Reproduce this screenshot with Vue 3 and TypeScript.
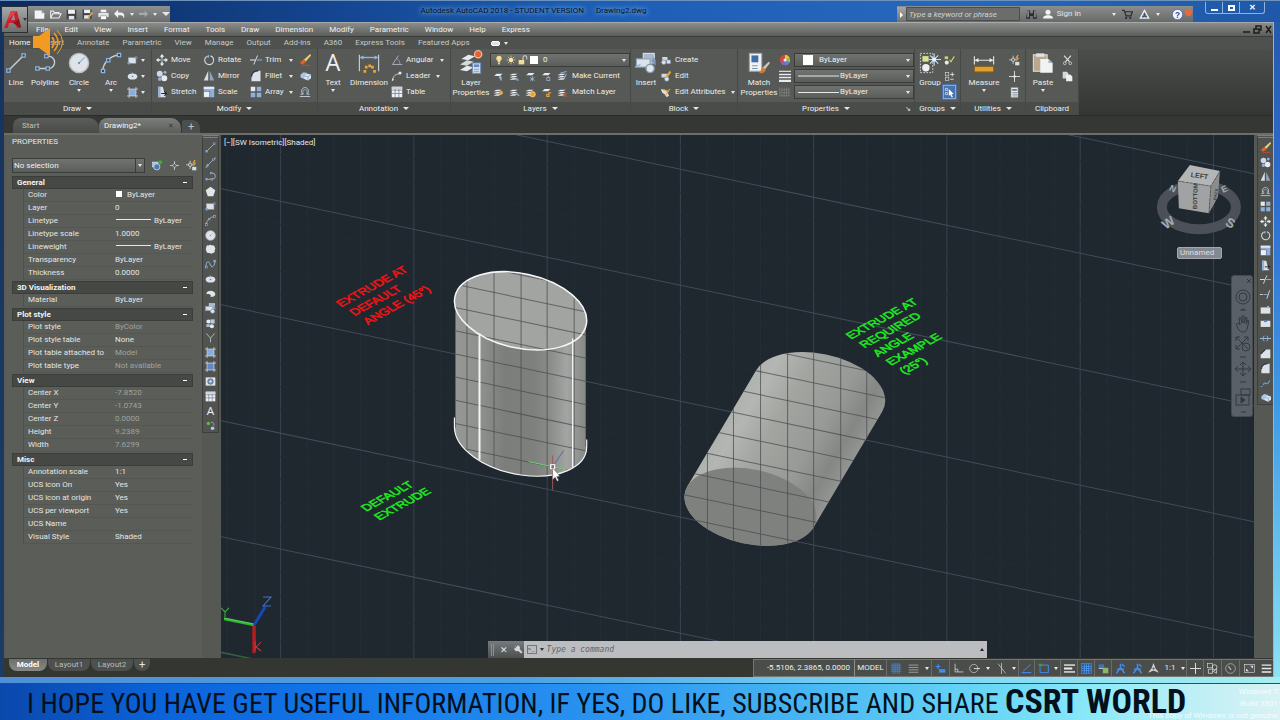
<script setup lang="ts">
import { h, ref } from 'vue'

const W = '#e8ebee'
const B = '#8fb4e0'
const O = '#e8a63a'
const dot = (x: number, y: number, c = B) => `<rect x="${x - 1.2}" y="${y - 1.2}" width="2.4" height="2.4" fill="#33465c" stroke="${c}" stroke-width=".9"/>`
const ln = (d: string, c = W, w = 1.2) => `<path d="${d}" fill="none" stroke="${c}" stroke-width="${w}"/>`
const fl = (d: string, c = W) => `<path d="${d}" fill="${c}"/>`
const rc = (x: number, y: number, w: number, hh: number, c = W, s = 'none') => `<rect x="${x}" y="${y}" width="${w}" height="${hh}" fill="${c}" stroke="${s}" stroke-width=".8"/>`
const ci = (x: number, y: number, r: number, c = W, s = 'none') => `<circle cx="${x}" cy="${y}" r="${r}" fill="${c}" stroke="${s}" stroke-width="1"/>`
const sheet = (y: number) => fl(`M3 ${y}l3-3h8l-3 3z`)
const stack = fl('M2 7l4-2h7l-4 2z') + fl('M2 10l4-2h7l-4 2z') + fl('M2 13l4-2h7l-4 2z')

const icons: Record<string, string> = {
  line: ln('M2 14L14 2', '#c9ced3', 1) + dot(2.5, 13.5) + dot(13.5, 2.5),
  pline: ln('M2 12h8.500a4 4 0 000-9H9', '#c9ced3', 1) + dot(2.5, 12) + dot(9, 3) + dot(10, 12),
  circle: ci(8, 8, 7, '#dfe3e8', '#b5bcc4') + ln('M8 8l4-4', B, 0.8) + ci(8, 8, 0.8, '#5c83b8'),
  arc: ln('M2 14C2 8 7 3 14 2', '#c9ced3', 1) + dot(2.2, 13.8) + dot(6, 6) + dot(13.8, 2.2),
  rect: rc(2, 4, 11, 8, '#dde2e8', '#9aa4b0') + dot(2.5, 12) + dot(13.5, 4),
  ellipse: '<ellipse cx="8" cy="8" rx="7" ry="4.500" fill="#dde2e8"/>' + ci(8, 8, 1.2, '#5c83b8') + ci(8, 3.5, 1.2, B),
  hatch: rc(3, 3, 10, 10, '#7ba3dc') + ln('M3 0v16M13 0v16M0 3h16M0 13h16', '#dfe6ee', 1) + ln('M4 9l5-5M5 12l7-7M8 13l5-5', '#c6daf5', 0.7),
  region: rc(3, 3, 10, 10, '#5f88c6') + ln('M3 0v16M13 0v16M0 3h16M0 13h16', '#dfe6ee', 1),
  move: fl('M8 0l3 3.500H9V6H7V3.500H5zM8 16l-3-3.500h2V10h2v2.500h2zM0 8l3.500-3v2H6v2H3.500v2zM16 8l-3.500 3V9H10V7h2.500V5z') + rc(7, 7, 2, 2, B),
  rotate: ln('M5 3.200A6 6 0 1 0 10 2.500', '#d5dade', 1.5) + fl('M3 4l5-3v4z', B),
  trim: ln('M0 8h7', W, 1.3) + ln('M9 8h7', B, 1.3) + ln('M5 14L10 2', W, 1.2),
  extend: ln('M0 8h4', W) + ln('M5 8h6', B) + ln('M10 14l4-12', W),
  erase: fl('M15 0l1 2-7 8-3-2z', '#f0d06a') + fl('M6 7l4 3-5 4-4-2z', '#d8652e') + ln('M4 15h11', '#d04a2a'),
  copy: ci(5, 5, 4, '#cfd8e2') + ci(11, 11, 4) + ci(5, 12, 2.5, B) + ci(12, 3, 2, B),
  mirror: fl('M7 1v13H1z', '#d8dde2') + fl('M9 1v13h6z', '#8ea4bd'),
  fillet: fl('M2 15V9c0-5 4-8 12-8v14z', '#dde2e8') + ln('M2 9c0-5 4-8 9-8', '#28384c', 1.8),
  chamfer: fl('M1 15V9l7-7h7v13z', '#dde2e8') + ln('M1 9l7-7', '#28384c', 1.5),
  explode: fl('M2 6l4-3 5 1v5l-4 3-5-2z', '#a9c4e4') + fl('M7 8l4-3 5 1v5l-4 3-5-2z', '#dbe6f2') + ln('M7 8l5 1v5M12 9l4-3', '#6d8db3', 0.8),
  stretch: fl('M3 1h6l4 14H3z', '#dde2e8') + fl('M3 1h3v14H3z', '#8fb0dc') + ln('M7 10h7M11 7l3 3-3 3', '#1d2a3a', 1.4),
  scale: rc(1, 1, 14, 14, '#8fb0dc') + rc(1, 7, 8, 8, '#eef1f4', '#4b5d74') + fl('M1 1h14v3H1z', '#e5e9ee'),
  array: rc(1, 1, 6, 6, '#e5e9ee') + rc(9, 1, 6, 6, '#8fb0dc') + rc(1, 9, 6, 6, '#8fb0dc') + rc(9, 9, 6, 6, '#8fb0dc'),
  offset: ln('M1 14h14M2 11h3C1 5 6 2 8 2s7 3 3 9h3', '#bfc9d6', 1.3) + ln('M6 11c-2-4 0-6 2-6s4 2 2 6', B),
  text: '<text x="8" y="14" text-anchor="middle" font-family="Open Sans" font-size="17" fill="#eef0f2">A</text>',
  dim: ln('M1 2v12M15 2v12', '#cdd3da', 0.8) + ln('M2 4h12', B, 1) + fl('M1 4l3-1.500v3zM15 4l-3-1.500v3z', B) + fl('M4 13h2v2H4zM5 10h2v2H5zM7.500 9h2v2h-2zM9.500 10h2v2h-2zM11 13h2v2h-2z', O),
  angular: ln('M2 14h13M2 14l8-12', '#b9c6d6', 1) + ln('M7 6c3 1 5 4 5 8', B, 1),
  leader: ln('M2 14c1-6 3-8 9-9', '#e1e5e8', 1.1) + fl('M1 15l1-4 2 2z') + ci(12, 4, 2),
  table: rc(1, 1, 14, 14, '#eef1f3') + ln('M1 5.500h14M1 10h14M5.500 4v11M10.500 4v11', '#6f7c8a', 1) + rc(1, 1, 14, 3, '#cdd3d9'),
  layers: fl('M1 5l5-3 5 1-5 3z') + fl('M0 9l5-3 5 1-5 3z', '#d5dade') + fl('M0 13l5-3 5 1-5 3z') + rc(9, 8, 6, 7.5, '#dfe7f0', '#6f8fb8') + rc(10, 9, 4, 2, '#5f8ac4') + ln('M10 12.500h4M10 14h4', '#7a8da3', 0.6) + ci(13.2, 1.6, 2.6, '#e2622d', '#f0b49b'),
  bulb: fl('M8 1a4.500 4.500 0 00-2 8.500V12h4V9.500A4.500 4.500 0 008 1z', '#f6e08a') + rc(6.5, 12.5, 3, 2.5, '#cfd4d8'),
  sun: ci(8, 8, 3.5, '#f8e9a8') + ln('M8 1v3M8 12v3M1 8h3M12 8h3M3 3l2 2M11 11l2 2M13 3l-2 2M5 11l-2 2', '#e9dc9a', 1.1),
  lock: rc(1, 8, 9, 7, '#f0dc95') + ln('M8 8V4a3 3 0 016 0v3', '#dfe3e7', 1.5),
  lay1: sheet(8) + fl('M10 8a2.500 2.500 0 012.500 4H13v2h-2v-2h-.5A2.500 2.500 0 0110 8z', B),
  lay2: stack + fl('M11 10l4 4h-4z', B),
  lay3: sheet(7) + ln('M11 8v7M8 10l6 4M14 10l-6 4', '#9cc4ee', 1),
  lay4: sheet(7) + ln('M9 10v4h4v-4zM11 8v2', '#a8c2de', 1),
  lay5: stack + ln('M10 13l4-8M6 4l8-2', B, 1.3),
  lay6: stack + ci(12, 9, 2.8, O),
  lay7: stack + ln('M15 13l-4-3', B, 1.5),
  lay8: stack + ci(11.5, 11, 3.6, O, '#f5dca0'),
  lay9: sheet(7) + ln('M9 14v-3h3v3zM12 11V9h3', O, 1.5),
  lay10: stack + ln('M9 10l5 4M14 10l-4 4', '#e0602c', 1.4),
  insert: rc(6, 1, 8, 7, '#aab9cb', '#dce3ea') + rc(1, 5, 10, 6, '#dbe3ee', '#8f9fb2') + ci(11, 12, 3, '#dfe5ec', '#8797aa') + ln('M0 11l4-2', B, 1) + fl('M13 3l2 3v4l-3-3z', '#7f99bb'),
  create: rc(3, 4, 7, 5, '#cfd8e3') + ci(5, 11, 3, '#dfe5ec', '#7a8da3') + rc(9, 8, 5, 5, '#dfe5ec', '#7a8da3'),
  edit: rc(2, 5, 8, 5, '#cfd8e3') + ci(9, 12, 3, '#dfe5ec', '#7a8da3') + fl('M7 9l6-8 2 2-5 7z', O),
  attr: fl('M1 4l5 1 4 3 2 5-3 2-3-4-3-2z', '#d9dee4') + ln('M5 5l7 2M7 13l6-9', O, 1.4),
  match: rc(1, 1, 9, 13, '#eff2f5', '#98a5b3') + rc(2.5, 2.5, 5, 5, '#3f6da8') + ln('M3 10h4M3 12h4', '#7f92a8', 0.7) + fl('M15 7l1 1-4 5-2-1z', '#cfc6bb') + fl('M11 11l2 2c-1 2-3 3-5 2 2-1 1-3 3-4z', '#d77a2c'),
  wheel: ci(8, 8, 7, '#d2483c') + fl('M8 8V1a7 7 0 016 3.500z', '#e9c63f') + fl('M8 8l6-3.500A7 7 0 0114 11.500z', '#8fc152') + fl('M8 8l6 3.500A7 7 0 018 15z', '#4c8cd6') + fl('M8 8v7a7 7 0 01-6-3.500z', '#7f64c4') + ci(8, 8, 2, '#f5f0ee'),
  lweight: rc(0, 1, 16, 1.5) + rc(0, 5, 16, 2) + rc(0, 9, 16, 2) + rc(0, 13, 16, 3),
  ltype: ln('M1 2v12M4 2v12M7 2v12M10 2v12M13 2v12M1 5h14M1 9h14M1 13h14', '#84898a', 0.8),
  group: '<rect x="1" y="1" width="9" height="14" fill="none" stroke="#d2d6da" stroke-width=".7" stroke-dasharray="1.200 1"/>' + rc(2.5, 3, 4.5, 4, '#dbe58c') + ci(5, 11.5, 2.7, '#eef1f3') + ln('M11 1v9M7 5.500h9M8 2.500l6 6M14 2.500l-6 6', '#bfe1ff', 0.8) + ci(11, 5.5, 1.5, '#ecf7ff'),
  ungroup: rc(1, 2, 5, 4, '#c9d07e') + ci(4, 11, 3) + ln('M8 7l2 3 5-8', '#e0db61', 1.5),
  gedit: rc(2, 2, 5, 5, 'none', W) + rc(2, 9, 5, 5, 'none', W) + ln('M9 5h6M12 2v6M9 12h5', W),
  gselect: ln('M2 2h3v3H2zM2 8h3v3H2z', '#dce9f8', 1) + fl('M7 3l7 7-3 .500 2 4-2 .500-2-4-2 2z', '#fff'),
  measure: ln('M1 3v6M15 3v6M2 6h12', '#e4e8eb', 0.8) + fl('M1 6l3-1.500v3zM15 6l-3-1.500v3z') + rc(1, 10.5, 14, 4, '#e0a030', '#8a6420'),
  qsel: ln('M6 1v12M0 7h12', W, 1) + ci(6, 7, 2.5, '#6a7076', W) + fl('M12 0l-3 5h3l-2 5 5-6h-3l2-4z', O) + rc(9, 10, 6, 5, '#d9dee3'),
  point: ln('M8 0v16M0 8h16', '#dfe3e6', 1.3) + ci(8, 8, 1.8),
  pick: ln('M8 0v16M0 8h16', W, 1.2) + ci(8, 8, 3, '#50534f', W),
  calc: rc(3, 1, 10, 14, '#e9ecef', '#9aa2aa') + rc(4.5, 3, 7, 2.5, '#6b7784') + ln('M5 8h7M5 10.500h7M5 13h7', '#7e8993', 1.2),
  paste: rc(1, 2, 10, 12, '#b9a98c', '#dedad1') + rc(3, 1, 6, 2.5, '#dfe3e6') + fl('M6 5h6l3 3v7H6z', '#f0f2f4') + fl('M12 5v3h3z', '#a9b1b9'),
  cut: ln('M3 1l8 9M13 1l-8 9', '#e3e6e9', 1.5) + ci(4, 12, 2, 'none', '#e3e6e9') + ci(12, 12, 2, 'none', '#e3e6e9'),
  copyclip: fl('M1 1h6l2 2v8H1z', '#d4d9de') + fl('M6 5h6l3 3v7H6z', '#eef1f3'),
  newf: fl('M1 2h10l4 4v8H1z', '#f3f4f5') + fl('M11 2v4h4z', '#9ba0a4'),
  open: ln('M1 13V3h4l1 2h7v2M1 13l3-6h12l-3 6z', '#f0f1f2', 1.5),
  save: rc(1, 1, 14, 14, '#3c4045') + rc(3, 1, 10, 6, '#eef0f2') + rc(4, 10, 8, 5, '#e2e5e8'),
  saveas: rc(1, 1, 13, 13, '#3c4045') + rc(3, 1, 9, 5, '#eef0f2') + rc(3, 9, 8, 5, '#e2e5e8') + fl('M14 4l2 2-6 7-2 1 1-3z', O),
  print: rc(4, 1, 8, 5, '#f4f5f6') + rc(0, 5, 16, 7, '#e2e4e6', '#666') + rc(4, 10, 8, 5, '#fff', '#777'),
  undo: fl('M0 7l6-6v4h4c5 0 6 5 4 9 0-4-2-5-4-5H6v4z', '#f0f1f2'),
  redo: fl('M16 7l-6-6v4H0v4h10v4z', '#a6aaab'),
  bino: fl('M2 2h4v4h4V2h4l2 12h-6v-4H6v4H0z', '#2b2e30') + ln('M3 3v9M13 3v9', '#e8eaec', 1.2),
  user: ci(8, 5, 4, '#f2f3f4') + fl('M0 15c1-5 5-5 8-5s7 0 8 5z', '#f2f3f4'),
  cart: ln('M0 2h3l3 8h7l2-6H4', '#2b2e30', 1.8) + ci(6, 13, 1.6, '#2b2e30') + ci(12, 13, 1.6, '#2b2e30'),
  a360: ln('M8 2L2 13h12z', '#e9eef5', 2) + ln('M8 6v4M5 12l3-2 3 2', '#33507a', 1.5),
  help: ci(8, 8, 7.5, '#f4f6fa', '#2f55a0') + '<text x="8" y="12.500" text-anchor="middle" font-family="Liberation Sans" font-weight="bold" font-size="12" fill="#2747a0">?</text>',
  polygon: fl('M8 1l7 5-3 9H4L1 6z', '#e2e6ea'),
  revcloud: fl('M2 4q0-3 3-2 3-2 5 0 4-1 4 2 2 3 0 5 1 4-3 4-2 2-4 0-4 1-5-2-2-3 0-7z', '#e2e6ea'),
  xline: ln('M1 15L15 1', '#c9ced3', 1) + dot(4, 12) + dot(12, 4) + ln('M1 15l3-1M15 1l-1 3', B),
  spline: ln('M1 12c2-14 6-6 7-3s5 5 7-7', '#9fc0ea', 1.3) + dot(2, 12) + dot(14, 3),
  ellarc: fl('M2 9c0-7 13-6 13 0 0 3-4 4-7 4 2-3-2-5-6-4z', '#dfe4e9'),
  mkblock: ci(5, 5, 3, W) + rc(8, 2, 6, 6, '#b8cbe2') + ci(10, 12, 3, W) + rc(2, 9, 5, 4, '#a9c0dc'),
  cross: ln('M2 2l6 7M14 2L8 9v6', '#c5cad0', 1.2),
  camera: rc(1, 2, 14, 12, '#dfe4e9') + ci(8, 8, 4, '#7e9cc2', '#3f5878') + ci(8, 8, 1.5, '#eef'),
  addsel: ci(5, 5, 2.6, '#63b548') + ci(11, 12, 2.6, '#a9cdf5') + ln('M9 3c4 0 4 4 4 5', '#c9ced3', 1),
  pickadd: rc(1, 3, 8, 7, '#a6c2e6', W) + ci(7, 10, 4.5, '#4b77b5', W) + ci(12, 3.5, 3, '#43a832'),
  brk: rc(1, 5, 14, 9, '#dfe3e7') + rc(10, 3, 3, 3, '#9fb9d9'),
  brk2: rc(1, 4, 14, 9, '#dfe3e7') + rc(6, 3, 4, 3, '#5c7fb0'),
  join: ln('M0 8h16', '#8fb4e0', 1.5) + ln('M6 4l-2 4 2 4M10 4l2 4-2 4', '#9fc0ea', 1.2),
  blend: ln('M1 13c3 3 4-6 7-4s4 1 7-6', '#6f9fdc', 1.6) + ln('M0 12h5M11 4h5', '#333', 1),
  sGrid: ln('M3 0v16M6 0v16M9 0v16M12 0v16M0 3h15M0 6h15M0 9h15M0 12h15', '#3f8ef0', 1),
  sSnap: ln('M1 3h14M1 6.500h14M1 10h14M1 13.500h14', '#b9bcbd', 1),
  sInfer: ln('M1 5h7M4.500 1v8', '#3f8ef0', 1.6) + rc(6, 9, 9, 5, '#3f8ef0'),
  sOrtho: ln('M3 1v12h12M3 9h4v4', '#c4c7c8', 1.3),
  sPolar: ci(7, 8, 6, 'none', '#d0d3d4') + ln('M7 8h9', '#d0d3d4', 1.5),
  sIso: ln('M3 1l11 14M8 0v16', '#bfc2c3', 1.2),
  sTrack: ln('M1 14h14', '#3f8ef0', 1.6) + ln('M3 12L14 2', '#5a8fd2', 1.3),
  sOsnap: ln('M4 3h11v11H3V6', '#3f8ef0', 1.4) + rc(1, 1, 5, 4, '#3b9a4a'),
  sLw: ln('M0 3h16', W, 2) + ln('M0 8h12', W, 3) + ln('M0 13h16', W, 2),
  sTrans: rc(1, 1, 14, 14, '#1f5cab', '#4e97f0') + ln('M1 5h14M1 8h14M1 11h14M5 1v14M8 1v14M11 1v14', '#66a8f5', 0.8),
  sCyc: rc(1, 2, 8, 6, '#3c76bd') + rc(7, 7, 8, 8, '#8db46a') + ln('M1 8h6', W, 1),
  sAnn: ln('M8 1v6L2 15M8 7l6 8M3 9h10', '#3f8ef0', 2.2) + ln('M10 2l4 3', '#3f8ef0', 2),
  sAnn2: fl('M8 0l3 8 5 6-8-3-8 3 5-6z', '#d5d8d9') + ci(8, 8, 1.5, '#4a4c4a'),
  sPlus: ln('M8 0v16M0 8h16', '#d8dbdc', 1.5),
  sWs: rc(1, 1, 7, 6, 'none', W) + ci(11, 6, 3.5, 'none', W) + ln('M2 9h6v6H2zM9 12l5 3v-6z', W, 1),
  sMon: ci(8, 8, 7, 'none', '#bfc2c3') + ln('M5 5l4 5', '#bfc2c3', 1.5),
  sFull: rc(1, 2, 14, 12, '#555', W) + fl('M9 4h4v4zM7 12H3V8z'),
  sMenu: ln('M1 3h14M1 8h14M1 13h14', W, 2),
}

const Icon = (p: { n: string; s?: number }) =>
  h('svg', { viewBox: '0 0 16 16', width: p.s ?? 12, height: p.s ?? 12, 'aria-hidden': 'true', innerHTML: icons[p.n] })
Icon.props = ['n', 's']

const menus = ['File', 'Edit', 'View', 'Insert', 'Format', 'Tools', 'Draw', 'Dimension', 'Modify', 'Parametric', 'Window', 'Help', 'Express']
const tabs = ['Home', 'Insert', 'Annotate', 'Parametric', 'View', 'Manage', 'Output', 'Add-ins', 'A360', 'Express Tools', 'Featured Apps']
const quick = ['newf', 'open', 'save', 'saveas', 'print', 'undo']
const drawBig = [
  { n: 'line', t: 'Line', c: 'w22', d: false },
  { n: 'pline', t: 'Polyline', c: 'w34', d: false },
  { n: 'circle', t: 'Circle', c: 'w32', d: true },
  { n: 'arc', t: 'Arc', c: 'w30', d: true },
]
const modifyCols = [
  [{ n: 'move', t: 'Move' }, { n: 'copy', t: 'Copy' }, { n: 'stretch', t: 'Stretch' }],
  [{ n: 'rotate', t: 'Rotate' }, { n: 'mirror', t: 'Mirror' }, { n: 'scale', t: 'Scale' }],
  [{ n: 'trim', t: 'Trim', d: true }, { n: 'fillet', t: 'Fillet', d: true }, { n: 'array', t: 'Array', d: true }],
]
const annot = [{ n: 'angular', t: 'Angular', d: true }, { n: 'leader', t: 'Leader', d: true }, { n: 'table', t: 'Table', d: false }]
const blocks = [{ n: 'create', t: 'Create', d: false }, { n: 'edit', t: 'Edit', d: false }, { n: 'attr', t: 'Edit Attributes', d: true }]

type Row = { k: string; v: string; dim?: boolean; sw?: boolean; line?: boolean }
const sections: { t: string; rows: Row[] }[] = [
  { t: 'General', rows: [
    { k: 'Color', v: 'ByLayer', sw: true }, { k: 'Layer', v: '0' }, { k: 'Linetype', v: 'ByLayer', line: true },
    { k: 'Linetype scale', v: '1.0000' }, { k: 'Lineweight', v: 'ByLayer', line: true },
    { k: 'Transparency', v: 'ByLayer' }, { k: 'Thickness', v: '0.0000' }] },
  { t: '3D Visualization', rows: [{ k: 'Material', v: 'ByLayer' }] },
  { t: 'Plot style', rows: [
    { k: 'Plot style', v: 'ByColor', dim: true }, { k: 'Plot style table', v: 'None' },
    { k: 'Plot table attached to', v: 'Model', dim: true }, { k: 'Plot table type', v: 'Not available', dim: true }] },
  { t: 'View', rows: [
    { k: 'Center X', v: '-7.8520', dim: true }, { k: 'Center Y', v: '-1.0743', dim: true },
    { k: 'Center Z', v: '0.0000', dim: true }, { k: 'Height', v: '9.2389', dim: true }, { k: 'Width', v: '7.6299', dim: true }] },
  { t: 'Misc', rows: [
    { k: 'Annotation scale', v: '1:1' }, { k: 'UCS icon On', v: 'Yes' }, { k: 'UCS icon at origin', v: 'Yes' },
    { k: 'UCS per viewport', v: 'Yes' }, { k: 'UCS Name', v: '' }, { k: 'Visual Style', v: 'Shaded' }] },
]
const closed = ref<string[]>([])
const toggle = (t: string) => {
  closed.value = closed.value.includes(t) ? closed.value.filter((x) => x !== t) : [...closed.value, t]
}

const drawTools = ['line', 'xline', 'pline', 'polygon', 'rect', 'arc', 'circle', 'revcloud', 'spline', 'ellipse', 'ellarc', 'insert', 'mkblock', 'cross', 'hatch', 'region', 'camera', 'table', 'text', 'addsel']
const modTools = ['erase', 'copy', 'mirror', 'offset', 'array', 'move', 'rotate', 'scale', 'stretch', 'trim', 'extend', 'brk', 'brk2', 'join', 'chamfer', 'fillet', 'blend', 'explode']

const status = [
  { n: 'sGrid', c: 'w18' }, { n: 'sSnap', c: 'w17' }, { n: '', c: 'w10 sep' }, { n: 'sInfer', c: 'w18 sep' },
  { n: 'sOrtho', c: 'w16' }, { n: 'sPolar', c: 'w17' }, { n: '', c: 'w10' }, { n: 'sIso', c: 'w16' }, { n: '', c: 'w10 sep' },
  { n: 'sTrack', c: 'w16 sep' }, { n: 'sOsnap', c: 'w16' }, { n: '', c: 'w10 sep' }, { n: 'sLw', c: 'w17 sep' },
  { n: 'sTrans', c: 'w17 sep' }, { n: 'sCyc', c: 'w17 sep' }, { n: 'sAnn', c: 'w17' }, { n: 'sAnn', c: 'w16' }, { n: 'sAnn2', c: 'w16' },
]
const statusEnd = [{ n: 'sPlus', c: 'w17 sep' }, { n: 'sWs', c: 'w18 sep' }, { n: 'sMon', c: 'w18 sep' }, { n: 'sFull', c: 'w18' }, { n: 'sMenu', c: 'w16' }]

const verticals = Array.from({ length: 40 }, (_, i) => ({ x: Math.round(228 + i * 26.6) + 0.5, major: i % 5 === 2 }))
const slopes = Array.from({ length: 42 }, (_, i) => {
  const k = i - 20
  const y = 304.4 + k * 23.15
  return { y1: y, y2: y + 216.5, major: (k + 100) % 5 === 0 }
})
const redText = ['EXTRUDE AT', 'DEFAULT', 'ANGLE (45°)']
const greenLeft = ['DEFAULT', 'EXTRUDE']
const greenRight = ['EXTRUDE AT', 'REQUIRED', 'ANGLE', 'EXAMPLE', '(25°)']
const command = ref('')
const keyword = ref('')
</script>

<template>
  <div class="desk">
    <div class="window">
      <header class="title">
        <nav class="quick" aria-label="Quick access">
          <button v-for="q in quick" :key="q" :aria-label="q"><Icon :n="q" :s="11" /></button>
          <i class="caret" /><button aria-label="redo"><Icon n="redo" :s="9" /></button><i class="caret" /><i class="caret big" />
        </nav>
        <h1>Autodesk AutoCAD 2018 - STUDENT VERSION <span>Drawing2.dwg</span></h1>
        <div class="info">
          <i class="arrow" />
          <input v-model="keyword" type="search" aria-label="Search help" placeholder="Type a keyword or phrase" />
          <button aria-label="Search"><Icon n="bino" :s="11" /></button>
          <button class="sign"><Icon n="user" :s="10" />Sign In</button>
          <i class="caret" />
          <button aria-label="Store"><Icon n="cart" :s="11" /></button>
          <button aria-label="Apps"><Icon n="a360" :s="11" /></button><i class="caret" />
          <button aria-label="Help" class="helpb"><Icon n="help" :s="11" /><b class="alert" /></button>
        </div>
        <div class="winbtns">
          <button aria-label="Minimize"><i class="min" /></button>
          <button aria-label="Maximize"><i class="max" /></button>
          <button aria-label="Close" class="x">✕</button>
        </div>
      </header>

      <nav class="menu" aria-label="Menu bar">
        <button v-for="m in menus" :key="m">{{ m }}</button>
        <span class="docbtns">
          <svg width="32" height="10" viewBox="0 0 32 10" aria-hidden="true">
            <path d="M1 7h7M12 4h5v4h-5zM14 4V1h5v4h-2M24 1l5 7M29 1l-5 7" fill="none" stroke="#1c1e1e" stroke-width="1.500" />
          </svg>
        </span>
      </nav>

      <button class="appbtn" aria-label="Application menu">
        <svg width="20" height="20" viewBox="0 0 20 20" aria-hidden="true">
          <path d="M1 18L8 1h6l4 17h-4l-2-5H6l-1 5z" fill="#c8202c" />
          <path d="M8 10l3-6 1 6z" fill="#8c9293" /><path d="M8 1h6l-9 9z" fill="#e4404a" /><path d="M10 13l6-4 2 9z" fill="#8e1420" />
        </svg>
        <i class="caret dark" />
      </button>

      <div class="tabs" role="tablist">
        <button v-for="(t, i) in tabs" :key="t" role="tab" :class="{ on: i === 0 }">{{ t }}</button>
        <span class="pill" /><i class="caret" />
      </div>

      <div class="ribbon">
        <section class="panel p-draw">
          <div class="body">
            <button v-for="b in drawBig" :key="b.t" class="bigb" :class="b.c"><Icon :n="b.n" :s="22" />{{ b.t }}<i v-if="b.d" class="caret" /></button>
            <div class="col">
              <button v-for="n in ['rect', 'ellipse', 'hatch']" :key="n" class="row" :aria-label="n"><Icon :n="n" :s="11" /><i class="caret" /></button>
            </div>
          </div>
          <footer>Draw <i class="caret" /></footer>
        </section>
        <section class="panel p-mod">
          <div class="body">
            <div v-for="(c, i) in modifyCols" :key="i" class="col modc">
              <button v-for="b in c" :key="b.t" class="row"><Icon :n="b.n" :s="12" />{{ b.t }}<i v-if="'d' in b" class="caret end" /></button>
            </div>
            <div class="col">
              <button v-for="n in ['erase', 'explode', 'offset']" :key="n" class="row" :aria-label="n"><Icon :n="n" :s="12" /></button>
            </div>
          </div>
          <footer>Modify <i class="caret" /></footer>
        </section>
        <section class="panel p-ann">
          <div class="body">
            <button class="bigb w28"><Icon n="text" :s="22" />Text<i class="caret" /></button>
            <button class="bigb w44"><Icon n="dim" :s="22" />Dimension</button>
            <div class="col">
              <button v-for="b in annot" :key="b.t" class="row"><Icon :n="b.n" :s="12" />{{ b.t }}<i v-if="b.d" class="caret ml" /></button>
            </div>
          </div>
          <footer>Annotation <i class="caret" /></footer>
        </section>
        <section class="panel p-lay">
          <div class="body">
            <button class="bigb w38"><Icon n="layers" :s="22" />Layer<br />Properties</button>
            <div class="col grow">
              <label class="combo layer">
                <Icon n="bulb" :s="10" /><Icon n="sun" :s="10" /><Icon n="lock" :s="10" /><i class="sw" />
                <select aria-label="Layer"><option>0</option></select><i class="caret" />
              </label>
              <div class="row tools"><Icon v-for="i in 5" :key="i" :n="'lay' + i" :s="12" /><button>Make Current</button></div>
              <div class="row tools"><Icon v-for="i in 5" :key="i" :n="'lay' + (i + 5)" :s="12" /><button>Match Layer</button></div>
            </div>
          </div>
          <footer>Layers <i class="caret" /></footer>
        </section>
        <section class="panel p-blk">
          <div class="body">
            <button class="bigb w28"><Icon n="insert" :s="22" />Insert</button>
            <div class="col">
              <button v-for="b in blocks" :key="b.t" class="row"><Icon :n="b.n" :s="12" />{{ b.t }}<i v-if="b.d" class="caret ml" /></button>
            </div>
          </div>
          <footer>Block <i class="caret" /></footer>
        </section>
        <section class="panel p-prop">
          <div class="body">
            <button class="bigb w40"><Icon n="match" :s="22" />Match<br />Properties</button>
            <div class="col grow">
              <div class="row"><Icon n="wheel" :s="12" /><label class="combo"><i class="sw lg" /><select aria-label="Object color"><option>ByLayer</option></select><i class="caret" /></label></div>
              <div class="row"><Icon n="lweight" :s="12" /><label class="combo"><i class="ln thick" /><select aria-label="Lineweight"><option>ByLayer</option></select><i class="caret" /></label></div>
              <div class="row"><Icon n="ltype" :s="12" /><label class="combo"><i class="ln" /><select aria-label="Linetype"><option>ByLayer</option></select><i class="caret" /></label></div>
            </div>
          </div>
          <footer>Properties <i class="caret" /><span class="launch">↘</span></footer>
        </section>
        <section class="panel p-grp">
          <div class="body">
            <button class="bigb w28"><Icon n="group" :s="22" />Group</button>
            <div class="col">
              <button class="row" aria-label="Ungroup"><Icon n="ungroup" :s="11" /></button>
              <button class="row" aria-label="Group edit"><Icon n="gedit" :s="11" /></button>
              <button class="row sel" aria-label="Group selection"><Icon n="gselect" :s="11" /></button>
            </div>
          </div>
          <footer>Groups <i class="caret" /></footer>
        </section>
        <section class="panel p-utl">
          <div class="body">
            <button class="bigb w44"><Icon n="measure" :s="22" />Measure<i class="caret" /></button>
            <div class="col pl3">
              <button v-for="n in ['qsel', 'point', 'calc']" :key="n" class="row" :aria-label="n"><Icon :n="n" :s="11" /></button>
            </div>
          </div>
          <footer>Utilities <i class="caret" /></footer>
        </section>
        <section class="panel p-clp">
          <div class="body">
            <button class="bigb w32"><Icon n="paste" :s="22" />Paste<i class="caret" /></button>
            <div class="col pl3">
              <button v-for="n in ['cut', 'copyclip']" :key="n" class="row" :aria-label="n"><Icon :n="n" :s="11" /></button>
            </div>
          </div>
          <footer>Clipboard</footer>
        </section>
      </div>

      <div class="files">
        <button class="ft">Start</button>
        <button class="ft act">Drawing2*<span>✕</span></button>
        <button class="plus" aria-label="New drawing">+</button>
      </div>

      <main>
        <aside class="palette">
          <h2>PROPERTIES</h2>
          <div class="pick">
            <label class="combo"><select aria-label="Selection"><option>No selection</option></select><span class="cb"><i class="caret" /></span></label>
            <Icon n="pickadd" :s="11" /><Icon n="pick" :s="9" /><Icon n="qsel" :s="11" />
          </div>
          <div v-for="s in sections" :key="s.t" class="sect">
            <button class="sh" @click="toggle(s.t)">{{ s.t }}<i /></button>
            <table v-if="!closed.includes(s.t)">
              <tbody>
                <tr v-for="r in s.rows" :key="r.k">
                  <th scope="row">{{ r.k }}</th>
                  <td :class="{ dim: r.dim }"><i v-if="r.sw" class="sw" /><i v-if="r.line" class="ln" />{{ r.v }}</td>
                </tr>
              </tbody>
            </table>
          </div>
        </aside>
        <div class="vbar" role="toolbar" aria-label="Draw">
          <button v-for="n in drawTools" :key="n" :aria-label="n"><Icon :n="n" :s="11" /></button>
        </div>

        <div class="canvas">
          <svg class="scene" viewBox="222 135 1031 523" preserveAspectRatio="xMinYMin slice" role="img" aria-label="Drawing">
            <defs>
              <linearGradient id="c1"><stop offset="0" stop-color="#969896" /><stop offset=".2" stop-color="#8e908e" /><stop offset=".38" stop-color="#7c7e7c" /><stop offset=".6" stop-color="#7e807d" /><stop offset=".72" stop-color="#8a8c89" /><stop offset=".85" stop-color="#a3a5a2" /><stop offset="1" stop-color="#858784" /></linearGradient>
              <linearGradient id="c2" gradientUnits="userSpaceOnUse" x1="714" y1="424" x2="840" y2="499"><stop offset="0" stop-color="#adafac" /><stop offset=".15" stop-color="#b4b6b3" /><stop offset=".35" stop-color="#a3a5a1" /><stop offset=".65" stop-color="#979996" /><stop offset=".82" stop-color="#858785" /><stop offset="1" stop-color="#9a9c99" /></linearGradient>
              <clipPath id="solids">
                <path d="M455 301V427A67 37.200 12.200 0 0 587 446V320A67 37.200 12.200 0 0 455 301Z" />
                <path d="M687.500 485.500L756 370A67 37.200 12.200 0 1 882 411L813.500 526.500A67 37.200 12.200 0 1 687.500 485.500Z" />
              </clipPath>
            </defs>
            <g>
              <line v-for="l in verticals" :key="'v' + l.x" :x1="l.x" :x2="l.x" y1="135" y2="658" :stroke="l.major ? '#3a4352' : '#252e38'" />
              <line v-for="(l, i) in slopes" :key="'s' + i" x1="222" x2="1253" :y1="l.y1" :y2="l.y2" :stroke="l.major ? '#424b5c' : '#232b34'" />
            </g>
            <path d="M456 301V427L455 427A67 37.200 12.200 0 0 587 446L586 446V320Z" fill="url(#c1)" />
            <ellipse cx="521" cy="310.500" rx="67" ry="37.200" transform="rotate(12.200 521 310.500)" fill="#a2a4a1" />
            <path d="M687.500 485.500L756 370A67 37.200 12.200 0 1 882 411L813.500 526.500A67 37.200 12.200 0 1 687.500 485.500Z" fill="url(#c2)" />
            <ellipse cx="750.500" cy="506" rx="67" ry="37.200" transform="rotate(12.200 750.500 506)" fill="#7f817e" />
            <g clip-path="url(#solids)" stroke="#4a4c50" stroke-opacity=".75">
              <line v-for="l in verticals" :key="'a' + l.x" :x1="l.x" :x2="l.x" y1="135" y2="658" />
              <line v-for="(l, i) in slopes" :key="'b' + i" x1="222" x2="1253" :y1="l.y1" :y2="l.y2" />
            </g>
            <g fill="none" stroke="#f4f5f4">
              <ellipse cx="521" cy="310.500" rx="67" ry="37.200" transform="rotate(12.200 521 310.500)" stroke-width="1.500" />
              <path d="M455 417V427A67 37.200 12.200 0 0 587 446V439" stroke-width="1.200" />
              <path d="M480 333V459" stroke-width="2" /><path d="M573 338V467" stroke-width="1.300" />
            </g>
            <path d="M529 461L553 466L566 469" stroke="#6ee06e" fill="none" /><path d="M553 455V489" stroke="#a0565a" fill="none" /><path d="M553 466L564 450" stroke="#6a6f9c" fill="none" />
            <rect x="551" y="464" width="4" height="4" fill="none" stroke="#fff" />
            <path d="M553 467V479L555.500 476.500L557.500 480.500L559 479.500L557 476L560 475.500Z" fill="#fff" stroke="#555" stroke-width=".4" />

            <g font-family="Liberation Sans, Arial, sans-serif" font-size="10" stroke-width=".5">
              <g transform="matrix(1.090 -.590 .940 .720 342 307)" fill="#f01414" stroke="#f01414"><text v-for="(t, i) in redText" :key="t" :x="i" :y="i * 13">{{ t }}</text></g>
              <g transform="matrix(1.090 -.590 .940 .720 367 511)" fill="#1ee81e" stroke="#1ee81e"><text v-for="(t, i) in greenLeft" :key="t" :x="i" :y="i * 13">{{ t }}</text></g>
              <g transform="matrix(1.090 -.590 .940 .720 851 339)" fill="#1ee81e" stroke="#1ee81e"><text v-for="(t, i) in greenRight" :key="t" :x="i" :y="i * 13">{{ t }}</text></g>
            </g>

            <g fill="none">
              <path d="M225 618L255 624" stroke="#2cb82c" stroke-width="2.500" /><path d="M225 617L255 623" stroke="#7fe07f" stroke-width=".7" />
              <path d="M255 624L266 606" stroke="#1548b8" stroke-width="3" /><path d="M255 625V652" stroke="#b41c20" stroke-width="3.500" />
              <path d="M222 607L226 611L230 607M226 611V616" stroke="#38b838" /><path d="M264 596H272L264 605H272" stroke="#3f74d8" /><path d="M256 640V650M262 641L257 646L262 650" stroke="#c83a3e" />
              <path d="M222 651L255 658" stroke="#2f6a3c" />
            </g>

            <g>
              <ellipse cx="1198" cy="207" rx="37" ry="22" fill="none" stroke="#4c5159" stroke-width="10" />
              <g fill="#a6aaae" font-family="Liberation Sans, Arial, sans-serif" font-weight="bold" font-size="13">
                <text transform="rotate(-35 1167 222)" x="1161" y="227">W</text><text transform="rotate(30 1229 223)" x="1225" y="227">S</text>
                <text transform="rotate(25 1173 188)" x="1169" y="192" font-size="9">N</text><text transform="rotate(-25 1223 188)" x="1220" y="192" font-size="9">E</text>
              </g>
              <path d="M1189 165L1219 171L1210 186L1177 181Z" fill="#b4b6b6" /><path d="M1177 181L1210 186L1208 213L1178 208Z" fill="#a0a2a3" /><path d="M1219 171L1210 186L1208 213L1217 197Z" fill="#8a8c8e" />
              <path d="M1177 181L1210 186L1219 171M1210 186L1208 213" fill="none" stroke="#55585a" stroke-dasharray="3 1" stroke-width=".8" />
              <g font-family="Liberation Sans, Arial, sans-serif" font-weight="bold" fill="#3b3e41">
                <text transform="rotate(8 1198 175)" x="1190" y="178" font-size="7">LEFT</text>
                <text transform="translate(1196 209) rotate(-88)" font-size="6">BOTTOM</text>
                <text transform="translate(1215 200) rotate(-80)" font-size="4">BACK</text>
              </g>
            </g>
          </svg>
          <span class="vp">[−][SW Isometric][Shaded]</span>
          <button class="unnamed">Unnamed</button>
          <div class="navbar" role="toolbar" aria-label="Navigation">
            <svg viewBox="0 0 22 141" width="22" height="141" fill="none" stroke="#33383f" stroke-width="1" aria-hidden="true">
              <path d="M15 3l4 4M19 3l-4 4" /><circle cx="11" cy="21" r="7" /><circle cx="11" cy="21" r="4" /><path d="M8 34h6M11 32v3" />
              <path d="M5 50c-2-3 1-4 3-1l-1-7 2 0 1 5 0-7h2v7l2-6 1 1-1 6 2-4 1 1-2 8c-2 5-8 4-10-3z" />
              <path d="M4 61l12 12M16 61L4 73M4 61v4M4 61h4M16 61v4M16 61h-4M4 73h4M4 73v-4" /><circle cx="14" cy="71" r="4" /><path d="M8 81h6" />
              <path d="M11 86v14M3 93h16M8 89l3-3 3 3M8 97l3 3 3-3M6 90l-3 3 3 3M16 90l3 3-3 3" /><path d="M8 106h6" />
              <rect x="9" y="113" width="9" height="6" /><rect x="4" y="119" width="13" height="10" /><path d="M9 121v6l4-3z" fill="#33383f" /><path d="M9 136h5" />
            </svg>
          </div>
          <form class="cmd" @submit.prevent>
            <span class="ctl"><i class="grip" /><button type="button" aria-label="Close">✕</button>
              <button type="button" aria-label="Customize"><svg width="9" height="9" viewBox="0 0 16 16"><path d="M2 1l3 3 1-3a4 4 0 014 6l5 6-2 2-6-5a4 4 0 01-6-5l3 1z" fill="#d6d9db" /></svg></button></span>
            <span class="prompt">&gt;_</span><i class="caret dark" />
            <input v-model="command" aria-label="Command" placeholder="Type a command" />
            <i class="caret up" />
          </form>
        </div>

        <div class="right">
          <div class="vbar" role="toolbar" aria-label="Modify">
            <button v-for="n in modTools" :key="n" :aria-label="n"><Icon :n="n" :s="11" /></button>
          </div>
        </div>
      </main>

      <footer class="status">
        <div class="layouts" role="tablist">
          <button class="on" role="tab">Model</button><button role="tab">Layout1</button><button role="tab">Layout2</button><button aria-label="New layout" class="add">+</button>
        </div>
        <div class="sbar">
          <output class="coords">-5.5106, 2.3865, 0.0000</output>
          <button class="model">MODEL</button>
          <button v-for="(s, i) in status" :key="i" :class="s.c" :aria-label="s.n || 'More'"><Icon v-if="s.n" :n="s.n" :s="11" /><i v-else class="caret" /></button>
          <button class="scale">1:1</button><button class="w8 sep" aria-label="Scale list"><i class="caret" /></button>
          <button v-for="s in statusEnd" :key="s.n" :class="s.c" :aria-label="s.n"><Icon :n="s.n" :s="11" /></button>
        </div>
      </footer>
    </div>

    <svg class="speaker" viewBox="0 0 32 32" width="32" height="32" aria-hidden="true">
      <path d="M1 9h6l11-8v28L7 21H1z" fill="#f39a22" />
      <g fill="none" stroke="#f39a22"><path d="M20 10q4 5 0 11" stroke-width="2" /><path d="M22 6q8 9 0 18" stroke-width="1.500" /><path d="M25 3q11 12 0 24" stroke-width="1" /></g>
    </svg>

    <div class="banner">
      <p>I HOPE YOU HAVE GET USEFUL INFORMATION, IF YES, DO LIKE, SUBSCRIBE AND SHARE <strong>CSRT WORLD</strong></p>
      <div class="mark">Windows 7<br />Build 7601<br />This copy of Windows is not genuine</div>
    </div>
  </div>
</template>

<style>
body { margin: 0; background: #0d3f8c; }
</style>

<style scoped>
* { box-sizing: border-box; }
.desk { position: relative; display: flex; flex-direction: column; min-height: 100vh; font: 8px/10px Roboto, "Open Sans", sans-serif; color: #e4e6e6; overflow: hidden; }
button { font: inherit; color: inherit; background: none; border: 0; padding: 0; margin: 0; display: inline-flex; align-items: center; white-space: nowrap; }
svg { display: block; flex: none; overflow: visible; }
.scene { overflow: hidden; }
i { font-style: normal; display: inline-block; flex: none; }
.window { flex: 1; position: relative; display: flex; flex-direction: column; padding: 0 6px 6px 4px; background: linear-gradient(#16335e, #1b3c66); border-top: 1px solid #6d93bd; }
.window::before { content: ""; position: absolute; right: 0; top: 0; bottom: 0; width: 6px; border-left: 1px solid #8fb6e0; background: linear-gradient(#2458a8, #2f6fd0 30%, #3f9be6 60%, #8fe4f4); }
.window::after { content: ""; position: absolute; left: 0; right: 0; bottom: 0; height: 6px; border-bottom: 1px solid #1c4f84; background: linear-gradient(90deg, #4f8fd8, #4d9fe4 40%, #74cdf0 65%, #a4f0f0); }
.caret { border: 2px solid transparent; border-top: 3px solid #e6e8e8; border-bottom: 0; width: 4px; height: 3px; }
.caret.big { border-width: 4px 4px 0; width: 8px; height: 4px; }
.caret.dark { border-top-color: #333; }
.caret.up { border-top: 0; border-bottom: 3px solid #222; }

.title { position: relative; display: flex; height: 21px; margin: 0 -6px 0 -4px; padding: 5px 0 0 28px; align-items: stretch; background: linear-gradient(90deg, #0c2b5e 0, #14448e 25%, #1d5db5 45%, #2767bb 75%, #1f58a8 100%); }
.quick { display: flex; align-items: center; gap: 5px; width: 142px; padding-left: 6px; background: linear-gradient(#8d9090, #6a6d6b); }
.title h1 { flex: 1; margin: 0; font-size: 8px; line-height: 10px; font-weight: 400; color: #0a1220; text-align: center; text-shadow: 0 0 4px #7fb2ea, 0 0 6px #7fb2ea; white-space: nowrap; }
.title h1 span { margin-left: 10px; }
.info { display: flex; flex: none; align-items: center; gap: 6px; width: 296px; background: linear-gradient(#8b8e8d, #676a68); }
.arrow { width: 9px; height: 15px; background: linear-gradient(#a4a7a6, #6f7271); position: relative; margin-right: -6px; }
.arrow::after { content: ""; position: absolute; left: 3px; top: 5px; border: 3px solid transparent; border-left-color: #fff; border-right: 0; }
.info input { flex: 1; min-width: 0; height: 14px; border: 1px solid #4c4f4e; background: #6a6d6b; padding: 0 2px; font: italic 8px/10px Roboto, sans-serif; color: #fff; }
.info input::placeholder { color: #cfd1d1; opacity: 1; }
.sign { gap: 4px; margin-right: 25px; }
.helpb { margin-left: 6px; }
.alert { width: 7px; height: 7px; border-radius: 50%; background: #e8683a; margin: -4px 1px 0 2px; }
.winbtns { display: flex; flex: none; margin: -4px 15px 0 12px; height: 12px; border: 1px solid #8fb3dd; border-top: 0; border-radius: 0 0 3px 3px; }
.winbtns button { width: 17px; justify-content: center; border-right: 1px solid #8fb3dd; color: #fff; }
.winbtns .x { width: 24px; border: 0; font-weight: 700; }
.min { width: 7px; height: 2px; background: #fff; margin-top: 4px; }
.max { width: 7px; height: 6px; border: 2px solid #fff; }

.menu { display: flex; align-items: center; height: 14px; padding-left: 32px; gap: 16px; background: linear-gradient(#8b8d8b, #5a5d5a); border-top: 1px solid #a7aaa8; color: #f0f1f1; }
.docbtns { margin-left: auto; }
.appbtn { position: absolute; left: 1px; top: 5px; width: 27px; height: 27px; background: linear-gradient(#a7a9a8, #6b6e6c); border: 1px solid #2c2f2f; padding-left: 1px; z-index: 2; }
.tabs { display: flex; align-items: center; gap: 13px; height: 13px; padding-left: 5px; background: #4e514d; border-top: 1px solid #3b3d3b; color: #c6c9c8; }
.tabs .on { color: #f2f3f3; }
.pill { width: 9px; height: 5px; border-radius: 2px; background: #e0e2e2; border: 1px solid #fff; margin-left: 8px; }
.tabs .caret { margin-left: -9px; }

.ribbon { display: flex; height: 67px; background: linear-gradient(#4b4e4a, #333632); border-bottom: 1px solid #2a2c2a; }
.panel { display: flex; flex-direction: column; flex: none; border-right: 1px solid #454845; background: #565955; color: #eceeee; }
.body { flex: 1; display: flex; padding: 3px 0 0 1px; }
.panel footer { height: 13px; display: flex; align-items: center; justify-content: center; gap: 5px; background: #494c48; position: relative; }
.panel footer .caret { border-width: 3px 3px 0; width: 6px; }
.p-draw { width: 148px; }
.p-mod { width: 166px; }
.p-ann { width: 133px; }
.p-lay { width: 180px; }
.p-blk { width: 107px; }
.p-prop { width: 177px; }
.p-grp { width: 46px; }
.p-utl { width: 65px; }
.p-clp { width: 53px; }
.bigb { flex-direction: column; align-items: center; flex: none; text-align: center; line-height: 10px; }
.bigb svg { margin: 0 0 4px; }
.bigb .caret { margin-top: 1px; }
.w8 { width: 8px; } .w10 { width: 10px; } .w16 { width: 16px; } .w17 { width: 17px; } .w18 { width: 18px; }
.w22 { width: 22px; } .w28 { width: 28px; } .w30 { width: 30px; } .w32 { width: 32px; } .w34 { width: 34px; } .w38 { width: 38px; } .w40 { width: 40px; } .w44 { width: 44px; }
.p-draw .body { gap: 1px; }
.col { display: flex; flex-direction: column; }
.grow { flex: 1; min-width: 0; }
.pl3 { padding-left: 3px; }
.row { height: 16px; display: flex; align-items: center; gap: 3px; white-space: nowrap; }
.modc { width: 47px; padding-left: 3px; }
.modc:nth-child(3) { width: 52px; }
.caret.end { margin-left: auto; margin-right: 6px; }
.caret.ml { margin-left: 3px; }
.tools { gap: 4px; padding-left: 2px; }
.combo { display: flex; align-items: center; flex: 1; height: 14px; padding: 0 3px; border: 1px solid #3a3d3a; background: linear-gradient(#70736f, #5a5d59); }
.combo select { appearance: none; flex: 1; min-width: 0; border: 0; padding: 0; background: transparent; font: inherit; color: #f0f1f1; }
.combo.layer { flex: none; margin: 1px 0; gap: 2px; padding-left: 3px; }
.combo.layer select { margin-left: 3px; }
.sw { width: 8px; height: 8px; background: #fff; }
.sw.lg { width: 10px; height: 10px; margin: 0 6px 0 5px; }
.combo .ln { width: 41px; height: 1px; background: #e8eaea; margin-right: 1px; }
.combo .thick { height: 2px; background: #a5a8a7; }
.sel { background: #4a73ad; outline: 1px solid #84a9dc; outline-offset: -2px; padding: 0 2px; margin-left: -2px; }
.launch { position: absolute; right: 3px; font-size: 7px; }

.files { display: flex; height: 17px; align-items: flex-end; padding-left: 9px; background: #353734; color: #c0c3c1; }
.ft { height: 15px; width: 86px; padding-left: 9px; background: linear-gradient(#5a5d5a, #484b48); border-radius: 8px 10px 0 0; }
.ft.act { width: 82px; padding-left: 5px; color: #f2f3f3; background: linear-gradient(#7b7e7b, #5b5e5a); }
.ft span { margin-left: auto; margin-right: 7px; color: #383a38; font-size: 7px; }
.plus { width: 18px; height: 13px; justify-content: center; background: #4b4e4b; margin-left: 1px; border-radius: 2px 8px 0 0; font-size: 11px; }

main { flex: 1; display: flex; border-top: 2px solid #6b6e6a; background: #555853; min-height: 0; padding-left: 1px; }
.palette { width: 197px; padding: 0 9px 0 7px; flex: none; background: #5a5d58; }
.palette h2 { margin: 0; height: 14px; font-size: 8px; line-height: 14px; font-weight: 400; color: #e8eaea; }
.pick { display: flex; align-items: center; gap: 7px; margin: 9px -4px 3px 0; height: 15px; }
.pick .combo { flex: none; width: 133px; padding: 0 0 0 1px; height: 15px; }
.cb { display: flex; align-items: center; justify-content: center; width: 9px; align-self: stretch; border-left: 1px solid #3a3d3a; }
.sect { margin-bottom: 1px; }
.sh { width: 100%; height: 13px; padding: 0 5px 0 4px; font-weight: 700; justify-content: space-between; background: #454844; border: 1px solid #3a3d39; color: #f2f3f3; }
.sh i { width: 4px; height: 1px; background: #fff; }
.sect .sh { display: flex; }
table { width: calc(100% - 11px); margin-left: 11px; border-collapse: separate; border-spacing: 0; table-layout: fixed; border-left: 1px solid #4e514d; }
th, td { height: 13px; padding: 0; font-weight: 400; text-align: left; border-bottom: 1px solid #535651; line-height: 10px; white-space: nowrap; }
th { width: 91px; padding-left: 4px; }
td.dim { color: #a0a3a0; }
td .sw { width: 6px; height: 6px; margin: 0 5px 0 1px; }
td .ln { width: 35px; height: 1px; background: #e6e8e8; margin: 0 3px 3px 1px; }
.vbar { width: 17px; display: flex; flex-direction: column; align-items: center; justify-content: space-between; padding: 4px 0 1px; border: 1px solid #3c3f3c; border-top: 3px double #7b7e7a; background: #50534f; align-self: flex-start; }
main > .vbar { height: 298px; margin-right: 2px; }
.right { width: 20px; padding-left: 3px; flex: none; }
.right .vbar { height: 270px; }

.canvas { position: relative; flex: 1; min-width: 0; background: #1f272f; overflow: hidden; }
.scene { position: absolute; inset: 0; width: 100%; height: 100%; }
.vp { position: absolute; left: 3px; top: 3px; color: #e6e8e8; }
.unnamed { position: absolute; right: 32px; top: 112px; width: 45px; height: 12px; padding-left: 2px; border: 1px solid #a4a8ac; border-radius: 2px; background: #848990; color: #dcdfe2; }
.navbar { position: absolute; right: 1px; top: 140px; width: 22px; height: 142px; background: #5a6068; border: 1px solid #444a52; border-radius: 3px; }
.cmd { position: absolute; left: 26%; right: 26%; bottom: 0; height: 17px; display: flex; align-items: center; gap: 3px; margin: 0 -2px; padding-right: 3px; background: #bbbdc0; }
.ctl { display: flex; align-items: center; gap: 6px; width: 36px; height: 17px; padding-left: 3px; flex: none; background: linear-gradient(#787b7b, #4c4f4f); color: #e4e6e6; }
.grip { width: 3px; height: 12px; border: 1px solid #8d9090; border-width: 0 1px; }
.ctl button { font-size: 9px; }
.prompt { width: 10px; height: 9px; font: 6px/8px "Liberation Mono", monospace; border: 1px solid #74777a; color: #333; }
.cmd input { flex: 1; min-width: 0; border: 0; background: transparent; padding: 0; font: italic 8px/12px "DejaVu Sans Mono", monospace; color: #222; }
.cmd input::placeholder { color: #63666a; opacity: 1; }

.status { height: 20px; display: flex; justify-content: space-between; background: #343632; border-bottom: 1px solid #2a2c2a; color: #eceeee; }
.layouts { display: flex; padding: 1px 0 0 5px; height: 13px; color: #b9bcba; }
.layouts button { height: 12px; width: 42px; justify-content: center; background: #4d504d; border-radius: 0 0 8px 8px; margin-right: 1px; }
.layouts .on { width: 38px; background: linear-gradient(#6d706d, #868985); color: #fff; font-weight: 700; }
.layouts .add { width: 16px; font-size: 11px; color: #e4e6e6; }
.sbar { display: flex; align-items: stretch; height: 18px; margin-top: 1px; background: #4a4d4a; border: 1px solid #737672; border-right: 0; }
.sbar button { justify-content: center; flex: none; }
.sep { border-right: 1px solid #696c69; }
.coords { width: 101px; display: flex; align-items: center; justify-content: flex-end; padding-right: 4px; border-right: 1px solid #8b8e8b; }
.model { width: 32px; border-right: 1px solid #696c69; }
.sbar .scale { width: 18px; }
.speaker { position: absolute; left: 32px; top: 27px; z-index: 3; }

.banner { position: relative; height: 36px; flex: none; display: flex; align-items: center; overflow: hidden; background: linear-gradient(90deg, #0a48ac 0, #0b62d8 12%, #1478ea 28%, #2b95f0 48%, #48b6f2 63%, #6bd8f6 78%, #8eeaf8 86%, #bdeff6 93%, #d9f2f4 100%); }
.banner p { position: relative; z-index: 1; margin: 0; padding-left: 27px; font: 28px/36px "Roboto Condensed", Roboto, sans-serif; color: #04101c; white-space: nowrap; }
.banner strong { font-size: 34px; }
.mark { position: absolute; right: 2px; top: 2px; font-size: 8px; line-height: 12px; text-align: right; color: #fff; opacity: .85; }
</style>
